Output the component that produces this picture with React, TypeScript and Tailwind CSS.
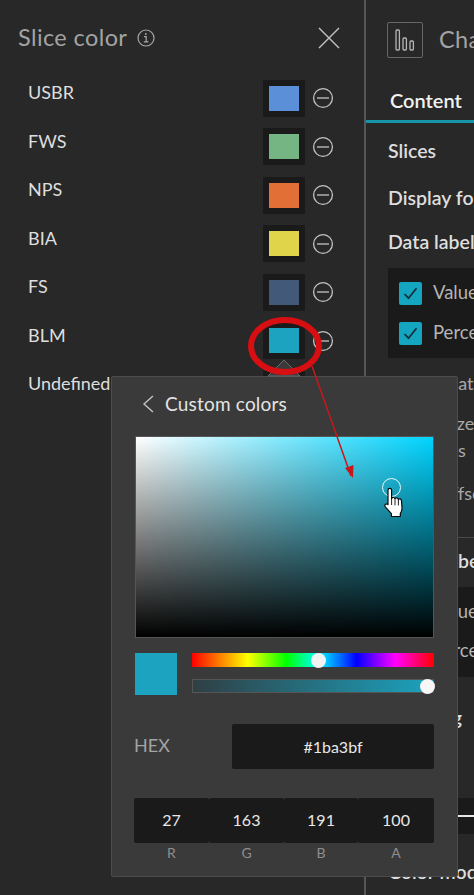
import React from "react";

const rows = [
  { name: "USBR", color: "bg-[#5b8fd8]" },
  { name: "FWS", color: "bg-[#74b583]" },
  { name: "NPS", color: "bg-[#e26f36]" },
  { name: "BIA", color: "bg-[#dfd44a]" },
  { name: "FS", color: "bg-[#43597a]" },
  { name: "BLM", color: "bg-[#1ba3bf]" },
  { name: "Undefined", color: "bg-[#888888]" },
];

function MinusCircle() {
  return (
    <svg width="22" height="22" viewBox="0 0 22 22" fill="none" stroke="#c4c4c4" strokeWidth="1.3">
      <circle cx="11" cy="11" r="9.4" />
      <path d="M5 11h12" />
    </svg>
  );
}

function Check() {
  return (
    <div className="w-[23px] h-[23px] rounded-[2px] bg-[#14a6c0] flex items-center justify-center shrink-0">
      <svg width="17" height="17" viewBox="0 0 17 17" fill="none" stroke="#12303a" strokeWidth="1.8">
        <path d="M2.5 9l4 4.2 8-10" />
      </svg>
    </div>
  );
}

function CheckList() {
  return (
    <>
      <div className="h-[23px] flex items-center gap-[11px] text-[#b5b5b5] text-[18.5px] leading-none">
        <Check />
        <span className="-mt-[2px]">Value</span>
      </div>
      <div className="h-[23px] flex items-center gap-[11px] text-[#b5b5b5] text-[18.5px] leading-none">
        <Check />
        <span className="-mt-[2px]">Percentage</span>
      </div>
    </>
  );
}

export default function App() {
  return (
    <div className="relative flex w-[474px] h-[895px] overflow-hidden bg-[#282828] font-['Lato','Open_Sans',sans-serif]">
      {/* left panel */}
      <div className="w-[366px] shrink-0 border-r-2 border-[#565656]">
        <div className="h-[74px] flex items-center pl-[18px] pr-[24px] pt-[2px]">
          <span className="text-[23.5px] leading-none text-[#a3a3a3] tracking-[0.4px]">Slice color</span>
          <svg className="ml-[10px]" width="18" height="18" viewBox="0 0 18 18" fill="none" stroke="#a8a8a8" strokeWidth="1.2">
            <circle cx="9" cy="9" r="8" />
            <path d="M7 7.6h2.2v5M6.8 12.8h4.600" />
            <circle cx="8.8" cy="5" r="0.9" fill="#a8a8a8" stroke="none" />
          </svg>
          <svg className="ml-auto" width="22" height="22" viewBox="0 0 22 22" fill="none" stroke="#c4c4c4" strokeWidth="1.4">
            <path d="M1 1l20 20M21 1L1 21" />
          </svg>
        </div>
        {rows.map((r) => (
          <div key={r.name} className="h-[48.5px] flex items-center pl-[28px] pr-[30px]">
            <span className="text-[18px] leading-none text-[#dedede] -mt-[12px]">{r.name}</span>
            <div className="ml-auto w-[42px] h-[37px] bg-[#1a1a1a] flex items-center justify-center">
              <div className={`w-[30px] h-[25px] ${r.color}`} />
            </div>
            <div className="ml-[7px]">
              <MinusCircle />
            </div>
          </div>
        ))}
      </div>

      {/* right panel */}
      <div className="flex-1 min-w-0 overflow-hidden whitespace-nowrap text-[#dedede]">
        <div className="flex items-center pl-[21px] pt-[22px]">
          <div className="w-[36px] h-[36px] shrink-0 border border-[#666666] rounded-[2px] flex items-center justify-center">
            <svg width="22" height="24" viewBox="0 0 22 24" fill="none" stroke="#b5b5b5" strokeWidth="1.3">
              <rect x="2" y="2" width="3.4" height="20" rx="1" />
              <rect x="9" y="10" width="3.4" height="12" rx="1" />
              <rect x="16" y="13" width="3.4" height="9" rx="1" />
            </svg>
          </div>
          <span className="ml-[16px] text-[23.5px] leading-none text-[#a3a3a3] tracking-[0.4px]">Chart</span>
        </div>
        <div className="h-[45px] mt-[20px] border-b-[3px] border-[#1795a8] pl-[24px] pt-[11px] text-[20px] leading-[22px] font-semibold text-[#f2f2f2]">
          Content
        </div>
        <div className="pl-[22px] pt-[17px] text-[19.5px] leading-[22px] font-semibold">Slices</div>
        <div className="pl-[22px] pt-[25px] text-[19.5px] leading-[22px] font-semibold">Display format</div>
        <div className="pl-[22px] pt-[22px] text-[19.5px] leading-[22px] font-semibold">Data labels</div>
        <div className="ml-[22px] mt-[15px] h-[90px] bg-[#1a1a1a] pl-[11px] pt-[14px] flex flex-col gap-[16.500px]">
          <CheckList />
        </div>
        <div className="pl-[34px] pt-[15px] text-[18px] leading-[21px] text-[#a8a8a8]">Show data</div>
        <div className="pl-[32px] pt-[19px] text-[18px] leading-[21px] text-[#a8a8a8]">Label size</div>
        <div className="pl-[92px] pt-[6px] text-[18px] leading-[21px] text-[#a8a8a8]">s</div>
        <div className="pl-[72px] pt-[22px] text-[18px] leading-[21px] text-[#a8a8a8]">Offset</div>
        <div className="mt-[33px] border-t border-[#4a4a4a] pl-[50px] pt-[12px] text-[19.5px] leading-[22px] font-semibold">Number</div>
        <div className="ml-[22px] mt-[15px] h-[90px] bg-[#1a1a1a] pl-[11px] pt-[14px] flex flex-col gap-[16px]">
          <CheckList />
        </div>
        <div className="pl-[24px] pt-[30px] text-[19.5px] leading-[22px] font-semibold">Labeling</div>
        <div className="mt-[69px] h-[36px] bg-[#1a1a1a] flex items-center justify-end">
          <div className="w-[16px] h-[2px] bg-[#e6e6e6]" />
        </div>
        <div className="pl-[22px] pt-[27px] text-[19.5px] leading-[22px] font-semibold">Color mode</div>
      </div>

      {/* popover */}
      <div className="absolute left-[111px] top-[376px] w-[347px] h-[501px] bg-[#3a3a3a] border border-[#4c4c4c] rounded-[2px] pl-[23px] pr-[23px]">
        <div className="flex items-center h-[59px] pl-[6px] pb-[6px]">
          <svg width="14" height="20" viewBox="0 0 14 20" fill="none" stroke="#c4c4c4" strokeWidth="1.4">
            <path d="M12 2L3 10l9 8" />
          </svg>
          <span className="ml-[10px] text-[19px] leading-none text-[#e4e4e4] tracking-[0.2px]">Custom colors</span>
        </div>
        <div className="w-[299px] h-[202px] border border-[#555555] bg-[linear-gradient(to_top,#000000,transparent),linear-gradient(to_right,#ffffff,#00d4ff)]" />
        <div className="flex mt-[15px]">
          <div className="w-[42px] h-[42px] bg-[#1ba3bf]" />
          <div className="ml-[15px] w-[242px] flex flex-col gap-[12px]">
            <div className="relative h-[14px] bg-[linear-gradient(to_right,#ff0000,#ffff00_23%,#00ff00_39%,#00ffff_52%,#0000ff_68%,#ff00ff_84%,#ff0000)]">
              <div className="absolute left-[119px] top-0 w-[15px] h-[15px] rounded-full bg-[#f2f2f2]" />
            </div>
            <div className="relative h-[14px] border border-[#555555] bg-[linear-gradient(to_right,#2f3f44,#1ba3bf)]">
              <div className="absolute right-[-2px] top-[-1px] w-[15px] h-[15px] rounded-full bg-[#f7f7f7]" />
            </div>
          </div>
        </div>
        <div className="flex items-center mt-[29px]">
          <span className="w-[97px] -ml-[1px] -mt-[4px] text-[18px] leading-none text-[#a3a3a3]">HEX</span>
          <div className="w-[202px] ml-[1px] h-[45px] bg-[#1a1a1a] rounded-[2px] flex items-center justify-center text-[16px] text-[#e8e8e8]">
            #1ba3bf
          </div>
        </div>
        <div className="grid grid-cols-[75px_75px_74px_76px] mt-[29px] -ml-[1px]">
          {["27", "163", "191", "100"].map((v) => (
            <div key={v} className="h-[45px] pb-[2px] bg-[#1a1a1a] rounded-[2px] flex items-center justify-center text-[16px] text-[#e8e8e8]">
              {v}
            </div>
          ))}
          {["R", "G", "B", "A"].map((v) => (
            <div key={v} className="pt-[2px] text-center text-[14px] leading-[16px] text-[#8e8e8e]">
              {v}
            </div>
          ))}
        </div>
      </div>

      {/* picker ring, pointer */}
      <div className="absolute left-[382px] top-[478px] w-[19px] h-[19px] rounded-full border-[1.5px] border-[#e8f8fc]" />
      <svg className="absolute left-[383px] top-[487px]" width="24" height="32" viewBox="0 0 24 32" fill="#ffffff" stroke="#0a0a0a" strokeWidth="1.2" strokeLinejoin="round">
        <path d="M5 3.2c0-2.4 3.6-2.4 3.6 0v8.6c.2-1.8 3.2-1.8 3.4.2.3-1.6 3.2-1.6 3.4.6.5-1.2 3-1 3.1 1.1l.5 7.1c.1 2.5-.6 4-1.7 5.8v2.900H8.400v-2.800L2.300 19.900c-1.500-1.900 1-4 2.700-2.300V3.200z" />
        <path d="M8.600 12v6M12 12.300v6M15.400 13v5.500" fill="none" strokeWidth="0.9" />
      </svg>

      {/* annotations */}
      <svg className="absolute left-[240px] top-[310px] pointer-events-none" width="130" height="180" viewBox="0 0 130 180" fill="none">
        <path d="M44 50l-16 16h32z" fill="#3a3a3a" stroke="#6a6a6a" strokeWidth="1" />
        <ellipse cx="45" cy="36" rx="34" ry="26" stroke="#d80f12" strokeWidth="6" />
        <path d="M72 56l39 110" stroke="#c8181c" strokeWidth="1.5" />
        <path d="M105 158l8 10 .5-13z" fill="#c8181c" />
      </svg>
    </div>
  );
}
